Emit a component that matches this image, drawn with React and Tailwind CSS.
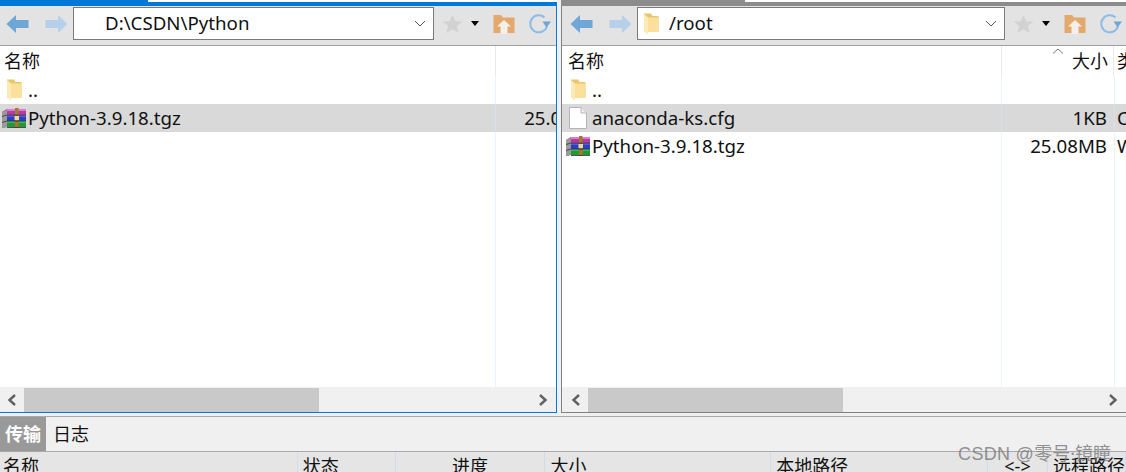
const FONT = '"Noto Sans", "Noto Sans CJK SC", sans-serif'

function ArrowIcon({ flip, light }) {
  return (
    <svg width="23" height="18" viewBox="0 0 23 18" className={flip ? 'scale-x-[-1]' : ''}>
      <path d="M10 0 L0.5 9 L10 18 L10 13 L22.5 13 L22.5 5 L10 5 Z" fill={light ? '#b5d0e8' : '#6ea6d8'} />
    </svg>
  )
}

function StarIcon() {
  return (
    <svg width="21" height="20" viewBox="0 0 22 20">
      <path d="M11 0.5 L14 7 L21.5 7.5 L15.5 12 L17.5 19.5 L11 15.5 L4.5 19.5 L6.5 12 L0.5 7.5 L8 7 Z" fill="#d2d2d2" />
    </svg>
  )
}

function HomeIcon() {
  return (
    <svg width="22" height="20" viewBox="0 0 22 20">
      <path d="M0.5 1 H8 L10 3.5 H21.5 V19 H0.5 Z" fill="#e3a96c" />
      <path d="M11 6 L18 12.5 H14.5 V20 H7.5 V12.5 H4 Z" fill="#f3f0ec" />
    </svg>
  )
}

function RefreshIcon() {
  return (
    <svg width="24" height="22" viewBox="0 0 24 22">
      <path d="M16.5 4.5 A8.5 8.5 0 1 0 19 13" fill="none" stroke="#8dbce6" strokeWidth="2" />
      <path d="M14.5 8.5 L23 8.5 L18.5 14.5 Z" fill="#6ea6d8" />
    </svg>
  )
}

function FolderIcon() {
  return (
    <svg width="15" height="22" viewBox="1 0 15 22" className="shrink-0">
      <path d="M1 0.5 H8 L9.5 3 H15.5 V18.5 H1 Z" fill="#e9c56c" />
      <path d="M5 4.5 H15.5 V18.5 L5 19 Z" fill="#fae09a" />
      <path d="M1 1 L5 4.5 V21.5 L1 18.5 Z" fill="#fdeab4" />
    </svg>
  )
}

function FileIcon() {
  return (
    <svg width="18" height="22" viewBox="0 0 18 22">
      <path d="M0.5 0.5 H12 L17.5 6 V21.5 H0.5 Z" fill="#fff" stroke="#b4b4b4" />
      <path d="M12 0.5 V6 H17.5" fill="#f0f0f0" stroke="#b4b4b4" />
    </svg>
  )
}

function RarIcon() {
  return (
    <svg width="24" height="20" viewBox="1 0 24 20" className="shrink-0">
      <path d="M1 14.5 L6 13 H25 V19 H6 L1 20 Z" fill="#1f9a36" />
      <path d="M1 8.5 L6 7 H25 V13 H6 L1 14.5 Z" fill="#2a3fc4" />
      <path d="M1 4 L6 1 H25 V7 H6 L1 8.5 Z" fill="#b53aa3" />
      <path d="M6 1 H25 V3 H6 Z" fill="#e07ad0" />
      <path d="M6 7 H25 V8.5 H6 Z" fill="#6b80ec" />
      <path d="M6 13 H25 V14.5 H6 Z" fill="#5fd46e" />
      <path d="M1 4 L6 2 V19 L1 20 Z" fill="#9a9a9a" />
      <path d="M1 8.5 L6 7 M1 14.5 L6 13" stroke="#333" strokeWidth="0.8" />
      <path d="M14 0 H17.5 V20 H14 Z" fill="#a8772f" />
      <path d="M13.5 8 H18 V12 H13.5 Z" fill="#e8d9a0" />
      <path d="M6 7.2 H25 M6 13.2 H25 M6 19.5 H25" stroke="#2b2b2b" strokeWidth="0.8" />
    </svg>
  )
}

function Chevron({ right }) {
  return (
    <svg width="10" height="12" viewBox="0 0 10 12">
      <path d={right ? 'M2 1 L7.5 6 L2 11' : 'M8 1 L2.5 6 L8 11'} fill="none" stroke="#606060" strokeWidth="2.4" />
    </svg>
  )
}

function Row({ icon, name, size, type, selected, nameW, indent }) {
  return (
    <div className={`flex h-[28px] w-[700px] items-center text-[18.7px] ${selected ? 'bg-[#d9d9d9]' : ''}`}>
      <div style={{ width: nameW, paddingLeft: indent }} className="flex h-full shrink-0 items-center">
        <span className="flex w-[28px] shrink-0 items-center justify-center">{icon}</span>
        <span>{name}</span>
      </div>
      <div className="h-full w-[113px] shrink-0 pr-[7px] text-right leading-[28px]">{size}</div>
      <div className="h-full pl-[3px] leading-[28px]">{type}</div>
    </div>
  )
}

function Pane({ active, path, pathIcon, pathPad, boxW, nameW, thumbW, rows, sorted, indent }) {
  return (
    <section className={`flex h-full w-full flex-col overflow-hidden ${active ? 'border-r border-b border-[#0078d7]' : 'border-l border-b border-[#808080]'}`}>
      <div className="flex h-[40px] shrink-0 items-center border-b border-[#a0a0a0] bg-[#e3e3e3] pb-[4px]" style={{ paddingLeft: active ? 6 : 8 }}>
        <ArrowIcon />
        <span className="ml-[16px] flex"><ArrowIcon flip light /></span>
        <div className="ml-[5px] flex h-[33px] shrink-0 items-center border border-[#7a7a7a] bg-white" style={{ paddingLeft: pathPad, width: boxW }}>
          {pathIcon}
          <span className="ml-[10px] flex-1 text-[18.7px]">{path}</span>
          <svg width="12" height="7" viewBox="0 0 12 7" className="mr-[7px]"><path d="M1 1 L6 6 L11 1" fill="none" stroke="#555" strokeWidth="1" /></svg>
        </div>
        <span className="ml-[8px] flex"><StarIcon /></span>
        <span className="ml-[8px] h-0 w-0 border-x-[4px] border-t-[5px] border-x-transparent border-t-black"></span>
        <span className="ml-[14px] flex"><HomeIcon /></span>
        <span className="ml-[13px] flex"><RefreshIcon /></span>
      </div>
      <div className="relative flex-1 overflow-hidden bg-white text-[18px] text-[#111]">
        {/* column rules run the full height of the list */}
        <div className="absolute top-[30px] bottom-0 w-px bg-[#dce8f5]/50" style={{ left: nameW }}></div>
        <div className="absolute top-[30px] bottom-0 w-px bg-[#dce8f5]/50" style={{ left: nameW + 113 }}></div>
        <div className="relative flex h-[30px] w-[700px] items-center">
          <div style={{ width: nameW, paddingLeft: 4 + indent }} className="h-full shrink-0 leading-[31px]">名称</div>
          <div className="h-full w-[113px] shrink-0 border-x border-[#e9e9e9] pr-[5px] text-right leading-[31px]">{sorted && '大小'}</div>
          {sorted && <div className="h-full pl-[3px] leading-[31px]">类型</div>}
          {sorted && (
            <svg width="12" height="6" viewBox="0 0 12 6" className="absolute top-[2px] left-[490px]"><path d="M1 5.5 L6 1 L11 5.5" fill="none" stroke="#777" strokeWidth="1" /></svg>
          )}
        </div>
        {rows.map((r) => (
          <Row key={r.name} {...r} nameW={nameW} indent={indent} />
        ))}
      </div>
      <div className="flex h-[25px] shrink-0 items-center bg-[#f0f0f0]" style={{ paddingLeft: indent }}>
        <span className="flex w-[24px] shrink-0 justify-center"><Chevron /></span>
        <div className="flex h-full flex-1 items-center">
          <div className="h-[24px] bg-[#c9c9c9]" style={{ width: thumbW }}></div>
          <div className="flex-1"></div>
        </div>
        <span className="flex w-[24px] shrink-0 justify-center pr-[3px]"><Chevron right /></span>
      </div>
    </section>
  )
}

const UP = { icon: <FolderIcon />, name: '..' }
const TGZ = { icon: <RarIcon />, name: 'Python-3.9.18.tgz', size: '25.08MB', type: 'WinRAR' }

const TRANSFER_COLS = [
  { label: '名称', w: 'w-[298px]', cls: 'pl-[3px]' },
  { label: '状态', w: 'w-[98px]', cls: 'pl-[5px]' },
  { label: '进度', w: 'w-[150px]', cls: 'text-center' },
  { label: '大小', w: 'w-[226px]', cls: 'pl-[5px]' },
  { label: '本地路径', w: 'w-[217px]', cls: 'pl-[5px]' },
  { label: '<->', w: 'w-[60px]', cls: 'text-center' },
  { label: '远程路径', w: 'flex-1', cls: 'pl-[5px]' },
]

export default function App() {
  return (
    <div className="relative h-[472px] w-[1126px] overflow-hidden bg-[#f0f0f0] text-[#111]" style={{ fontFamily: FONT }}>
      <div className="flex h-[413px]">
        <div className="flex w-[557px] shrink-0 flex-col">
          <div className="relative h-[6px] shrink-0 bg-[#0078d7]">
            <div className="absolute top-0 right-0 left-[148px] h-[2px] bg-white"></div>
          </div>
          <div className="h-[407px]">
            <Pane
              active
              path="D:\CSDN\Python"
              pathPad={21}
              boxW={361}
              nameW={495}
              thumbW={295}
              indent={0}
              rows={[UP, { ...TGZ, selected: true, type: '' }]}
            />
          </div>
        </div>
        <div className="ml-[4px] flex min-w-0 flex-1 flex-col">
          <div className="relative h-[6px] shrink-0 bg-[#8c8c8c]">
            <div className="absolute top-0 right-0 left-[184px] h-[2px] bg-white"></div>
          </div>
          <div className="h-[407px]">
            <Pane
              path="/root"
              pathIcon={<FolderIcon />}
              pathPad={6}
              boxW={368}
              nameW={439}
              thumbW={255}
              indent={2}
              sorted
              rows={[
                UP,
                { icon: <FileIcon />, name: 'anaconda-ks.cfg', size: '1KB', type: 'CFG', selected: true },
                TGZ,
              ]}
            />
          </div>
        </div>
      </div>
      <div className="mt-[3px] h-[36px] border-y border-[#a9a9a9] bg-[#f0f0f0]">
        <div className="flex h-full items-center text-[18px]">
          <span className="flex h-full w-[46px] items-center justify-center bg-[#999] font-bold text-white">传输</span>
          <span className="ml-[7px]">日志</span>
        </div>
      </div>
      <div className="flex h-[30px] whitespace-nowrap bg-[#e5e5e5] text-[18px] leading-[29px]">
        {TRANSFER_COLS.map((c) => (
          <div key={c.label} className={`${c.w} border-r border-[#d3dbe6] ${c.cls}`}>{c.label}</div>
        ))}
      </div>
      <div className="absolute top-[440px] right-[15px] whitespace-nowrap text-[18px] text-[#777]/80">
        <span className="font-['Liberation_Sans'] tracking-[0.3px]">CSDN @</span>零号·镜瞳
      </div>
    </div>
  )
}
